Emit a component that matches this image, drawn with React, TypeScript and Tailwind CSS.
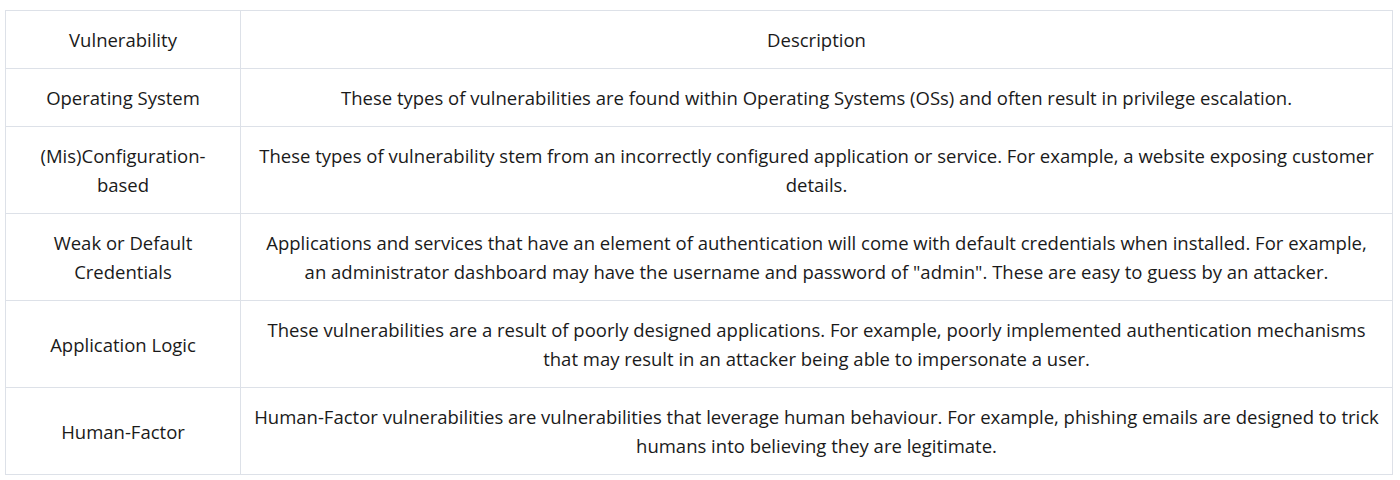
const rows: { name: React.ReactNode; desc: React.ReactNode }[] = [
  {
    name: 'Operating System',
    desc: 'These types of vulnerabilities are found within Operating Systems (OSs) and often result in privilege escalation.',
  },
  {
    name: (
      <>
        (Mis)Configuration-
        <br />
        based
      </>
    ),
    desc: (
      <>
        These types of vulnerability stem from an incorrectly configured application or service. For example, a website exposing customer
        <br />
        details.
      </>
    ),
  },
  {
    name: (
      <>
        Weak or Default
        <br />
        Credentials
      </>
    ),
    desc: (
      <>
        Applications and services that have an element of authentication will come with default credentials when installed. For example,
        <br />
        an administrator dashboard may have the username and password of "admin". These are easy to guess by an attacker.
      </>
    ),
  },
  {
    name: 'Application Logic',
    desc: (
      <>
        These vulnerabilities are a result of poorly designed applications. For example, poorly implemented authentication mechanisms
        <br />
        that may result in an attacker being able to impersonate a user.
      </>
    ),
  },
  {
    name: 'Human-Factor',
    desc: (
      <>
        Human-Factor vulnerabilities are vulnerabilities that leverage human behaviour. For example, phishing emails are designed to trick
        <br />
        humans into believing they are legitimate.
      </>
    ),
  },
];

export default function App() {
  return (
    <div className="min-h-[480px] bg-white pt-[10px] pl-[5px] font-['Open_Sans',sans-serif] text-[18.5px] text-[#1a1a1a]">
      <table className="w-[1388px] border-collapse border border-[#dde1e8] text-center leading-[29px]">
        <thead>
          <tr>
            <th className="w-[235px] border border-[#dde1e8] py-[14px] font-normal">Vulnerability</th>
            <th className="border border-[#dde1e8] py-[14px] font-normal">Description</th>
          </tr>
        </thead>
        <tbody>
          {rows.map((r, i) => (
            <tr key={i}>
              <td className="border border-[#dde1e8] px-1 py-[14px]">{r.name}</td>
              <td className="whitespace-nowrap border border-[#dde1e8] px-[12px] py-[14px]">{r.desc}</td>
            </tr>
          ))}
        </tbody>
      </table>
    </div>
  );
}
